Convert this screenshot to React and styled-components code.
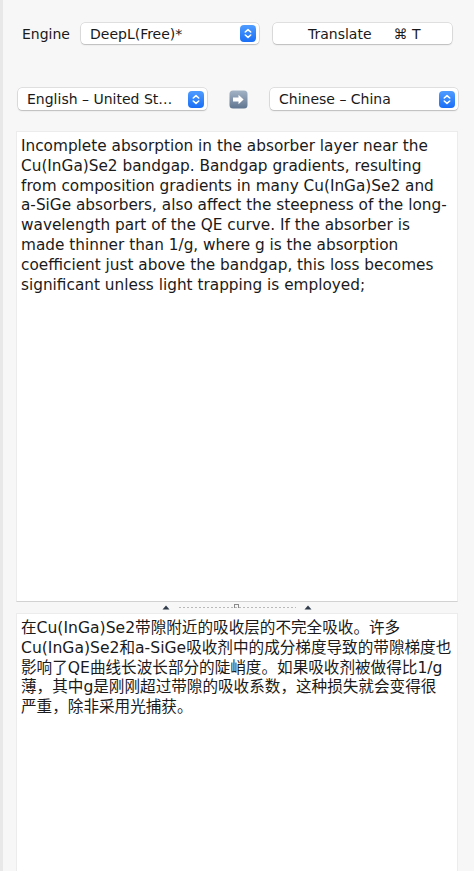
import React from "react";
import styled, { createGlobalStyle } from "styled-components";

const GlobalStyle = createGlobalStyle`
  html, body { margin: 0; padding: 0; height: 100%; }
  body {
    background: #f7f7f7;
    font-family: "DejaVu Sans", "Noto Sans CJK SC", sans-serif;
    color: #1a1a1a;
  }
  #root { height: 100%; }
`;

const Window = styled.div`
  height: 100vh;
  display: flex;
  flex-direction: column;
  border-left: 3px solid #e8e8e8;
  box-sizing: border-box;
  overflow: hidden;
`;

const TopRow = styled.div`
  display: flex;
  align-items: center;
  padding: 23px 22px 0 19px;
  height: 21px;
`;

const LangRow = styled.div`
  display: flex;
  align-items: center;
  padding: 0 16px 0 15px;
  margin-top: 44px;
  height: 22px;
`;

const Label = styled.span`
  font-size: 14px;
  margin-right: 11px;
`;

const Select = styled.div`
  display: flex;
  align-items: center;
  justify-content: space-between;
  width: ${(p) => p.w}px;
  height: ${(p) => p.h || 21}px;
  box-sizing: border-box;
  padding: 0 3px 0 9px;
  background: #fff;
  border-radius: 4px;
  box-shadow: 0 0 0 0.5px rgba(0, 0, 0, 0.18), 0 1px 1.5px rgba(0, 0, 0, 0.16);
  font-size: 14px;
  white-space: nowrap;
`;

const Button = styled.div`
  display: flex;
  align-items: center;
  justify-content: center;
  gap: 22px;
  margin-left: 14px;
  width: 180px;
  height: 21px;
  background: #fff;
  border-radius: 4px;
  box-shadow: 0 0 0 0.5px rgba(0, 0, 0, 0.18), 0 1px 1.5px rgba(0, 0, 0, 0.16);
  font-size: 14px;
  padding-left: 4px;
  box-sizing: border-box;
`;

const Arrow = styled.div`
  display: flex;
  width: 63px;
  justify-content: center;
`;

const Editor = styled.div`
  margin: ${(p) => p.mt}px 16px 0 13px;
  background: #fff;
  border: 1px solid #ececec;
  border-bottom: ${(p) => (p.top ? "1px solid #d2d2d2" : "none")};
  padding: 5px 4px;
  font-size: ${(p) => p.fs}px;
  line-height: 19.8px;
  flex: ${(p) => p.grow};
  min-height: 0;
  box-sizing: border-box;
  overflow: hidden;
`;

const Line = styled.div`
  white-space: nowrap;
`;

const Splitter = styled.div`
  height: 11px;
  margin: 0 16px 0 13px;
  display: flex;
  align-items: center;
  justify-content: center;
  gap: 4px;
`;

const Dots = styled.div`
  position: relative;
  width: 118px;
  height: 1px;
  background-image: radial-gradient(circle, #6f6f6f 0.6px, transparent 0.8px);
  background-size: 4px 2px;
  margin: 0 4px;
`;

const Grip = styled.span`
  position: absolute;
  left: 56px;
  top: -3px;
  width: 5px;
  height: 4px;
  border: 1px solid #8a8a8a;
  border-bottom: none;
  box-sizing: border-box;
`;

const Stepper = () => (
  <svg width="16" height="17" viewBox="0 0 16 17">
    <defs>
      <linearGradient id="sg" x1="0" y1="0" x2="0" y2="1">
        <stop offset="0" stopColor="#4f9cff" />
        <stop offset="1" stopColor="#1a6ef5" />
      </linearGradient>
    </defs>
    <rect x="0" y="0" width="16" height="17" rx="4" fill="url(#sg)" />
    <path d="M5.3 7 L8 4.6 L10.7 7 M5.3 10 L8 12.4 L10.7 10" stroke="#fff" strokeWidth="1.6" fill="none" strokeLinecap="round" strokeLinejoin="round" />
  </svg>
);

const ArrowEmoji = () => (
  <svg width="19" height="19" viewBox="0 0 19 19">
    <defs>
      <linearGradient id="ag" x1="0" y1="0" x2="0" y2="1">
        <stop offset="0" stopColor="#a3b3c6" />
        <stop offset="1" stopColor="#5f7590" />
      </linearGradient>
    </defs>
    <rect x="0.5" y="0.5" width="18" height="18" rx="3.5" fill="url(#ag)" />
    <path d="M4 7.6 H9.5 V4.8 L14.6 9.5 L9.5 14.2 V11.4 H4 Z" fill="#fff" />
  </svg>
);

const Tri = () => (
  <svg width="8" height="5" viewBox="0 0 8 5">
    <path d="M0.5 4.5 L4 0.5 L7.5 4.5 Z" fill="#2f3a4a" />
  </svg>
);

const translated = [
  "在Cu(InGa)Se2带隙附近的吸收层的不完全吸收。许多",
  "Cu(InGa)Se2和a-SiGe吸收剂中的成分梯度导致的带隙梯度也",
  "影响了QE曲线长波长部分的陡峭度。如果吸收剂被做得比1/g",
  "薄，其中g是刚刚超过带隙的吸收系数，这种损失就会变得很",
  "严重，除非采用光捕获。",
];

export default function App() {
  return (
    <>
      <GlobalStyle />
      <Window>
        <TopRow>
          <Label>Engine</Label>
          <Select w={178}>
            <span>DeepL(Free)*</span>
            <Stepper />
          </Select>
          <Button>
            <span>Translate</span>
            <span>⌘ T</span>
          </Button>
        </TopRow>
        <LangRow>
          <Select w={189} h={22}>
            <span>English – United St…</span>
            <Stepper />
          </Select>
          <Arrow>
            <ArrowEmoji />
          </Arrow>
          <Select w={188} h={22}>
            <span>Chinese – China</span>
            <Stepper />
          </Select>
        </LangRow>
        <Editor top mt={21} fs={15.3} grow="0 0 471px">
          Incomplete absorption in the absorber layer near the Cu(InGa)Se2 bandgap. Bandgap gradients,
          resulting from composition gradients in many Cu(InGa)Se2 and a-SiGe absorbers, also affect the
          steepness of the long-wavelength part of the QE curve. If the absorber is made thinner than 1/g,
          where g is the absorption coefficient just above the bandgap, this loss becomes significant unless
          light trapping is employed;
        </Editor>
        <Splitter>
          <Tri />
          <Dots>
            <Grip />
          </Dots>
          <Tri />
        </Splitter>
        <Editor mt={0} fs={15.6} grow="1">
          {translated.map((l) => (
            <Line key={l}>{l}</Line>
          ))}
        </Editor>
      </Window>
    </>
  );
}
